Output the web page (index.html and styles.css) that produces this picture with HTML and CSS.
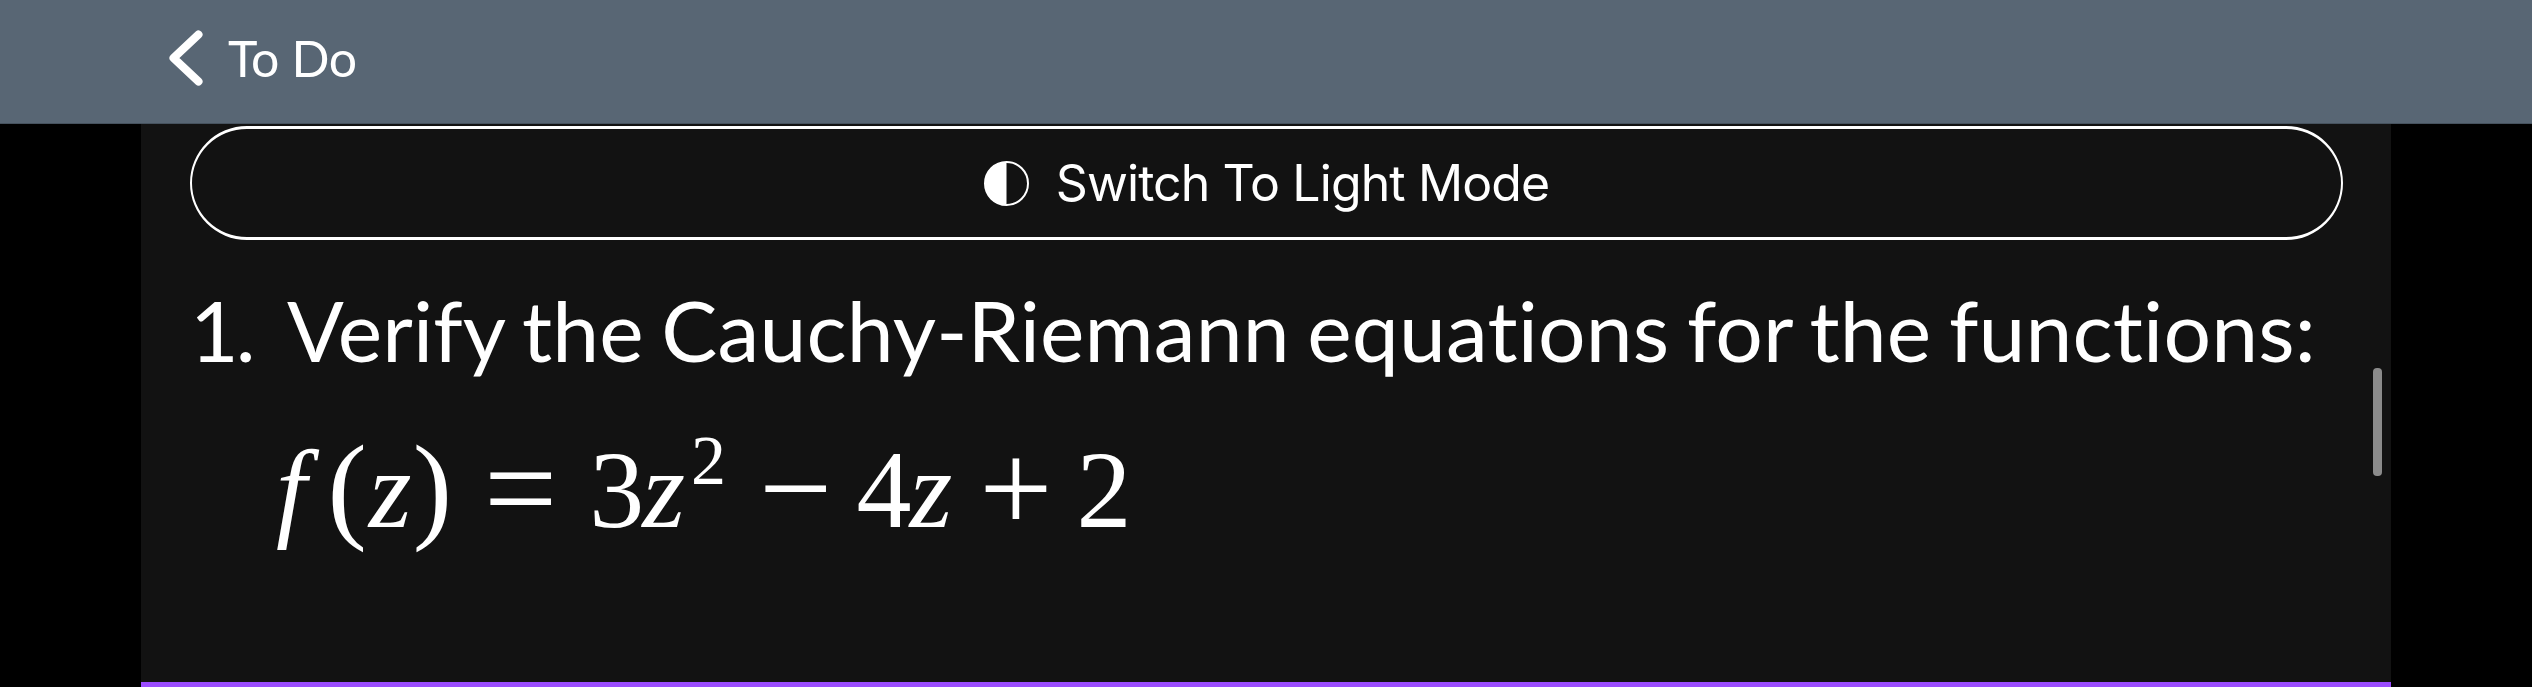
FILE: index.html
```html
<!DOCTYPE html>
<html lang="en">
<head>
<meta charset="utf-8">
<title>To Do</title>
<link rel="stylesheet" href="styles.css">
</head>
<body>
<header class="topbar">
  <svg class="chevron" viewBox="0 0 34 56" width="34" height="56" aria-hidden="true"><path d="M29.5 4.5 L4.5 28 L29.5 51.5" fill="none" stroke="#fff" stroke-width="8" stroke-linecap="round" stroke-linejoin="round"/></svg>
  <span class="back-label">To Do</span>
</header>
<main class="stage">
  <section class="panel">
    <div class="content">
      <button class="mode-btn" type="button">
        <svg class="mode-icon" viewBox="0 0 45 45" width="45" height="45" aria-hidden="true"><circle cx="22.5" cy="22.5" r="21.5" fill="none" stroke="#fff" stroke-width="2"/><path d="M22.5 1 A21.5 21.5 0 0 0 22.5 44 Z" fill="#fff"/></svg>
        <span>Switch To Light Mode</span>
      </button>
      <div class="question">
        <span class="num">1.</span>
        <div class="body">
          <p class="prompt">Verify the Cauchy-Riemann equations for the functions:</p>
          <div class="math"><i class="f">f</i><span class="lp">(</span><i class="z1">z</i><span class="rp">)</span><span class="eq op">=</span><span class="d3">3</span><i class="z2">z</i><sup class="sq">2</sup><span class="mi op">−</span><span class="d4">4</span><i class="z3">z</i><span class="pl op">+</span><span class="d2">2</span></div>
        </div>
      </div>
    </div>
    <div class="scrollthumb"></div>
    <div class="accent"></div>
  </section>
</main>
</body>
</html>
```
FILE: styles.css
```css
* { box-sizing: border-box; }
html, body { margin: 0; height: 100%; }
body {
  width: 2532px;
  height: 687px;
  overflow: hidden;
  background: #000;
  display: flex;
  flex-direction: column;
  color: #fff;
  font-family: "Lato", "Liberation Sans", sans-serif;
  font-variant-ligatures: none;
}
.topbar {
  height: 124px;
  flex: none;
  background: #586674;
  border-bottom: 1px solid #46525e;
  display: flex;
  align-items: center;
  padding: 0 0 7px 169px;
  gap: 25px;
}
.chevron { flex: none; }
.back-label {
  font-size: 50px;
  font-weight: 400;
  line-height: 60px;
  letter-spacing: -0.4px;
}
.stage {
  flex: 1;
  display: flex;
  justify-content: center;
  min-height: 0;
}
.panel {
  width: 2250px;
  background: #121212;
  position: relative;
  display: flex;
  flex-direction: column;
}
.content {
  flex: 1;
  padding: 2px 48px 0 49px;
}
.mode-btn {
  width: 100%;
  height: 114px;
  background: transparent;
  color: #fff;
  border-style: solid;
  border-color: #fff;
  border-width: 3px 2px;
  border-radius: 57px;
  display: flex;
  align-items: center;
  justify-content: center;
  gap: 27px;
  padding: 0;
  font-family: "Inter", "Liberation Sans", sans-serif;
  font-size: 50px;
  font-weight: 400;
  letter-spacing: -0.9px;
}
.mode-icon { flex: none; }
.question {
  display: flex;
  margin-top: 40px;
}
.num {
  width: 97px;
  flex: none;
  font-size: 84px;
  line-height: 100px;
  letter-spacing: -3px;
}
.prompt {
  margin: 0;
  font-size: 84px;
  line-height: 100px;
  letter-spacing: 0.15px;
  word-spacing: -4px;
  white-space: nowrap;
}
.math {
  display: flex;
  align-items: baseline;
  margin: 43px 0 0 -11px;
  font-family: "Liberation Serif", serif;
  font-size: 110px;
  line-height: 120px;
}
.math > * { display: block; flex: none; }
.op { font-size: 130px; line-height: 120px; transform: translateY(5px); }
.lp { margin-left: 21px; font-size: 118px; }
.z1 { margin-left: 2px; }
.rp { margin-left: 1px; font-size: 118px; }
.eq { margin-left: 32px; }
.d3 { margin-left: 32px; }
.z2 { margin-left: -2px; }
.sq { font-size: 70px; line-height: 0; transform: translateY(-43px); margin-left: 6px; }
.mi { margin-left: 33px; }
.d4 { margin-left: 24px; }
.z3 { margin-left: -2px; }
.pl { margin-left: 27px; }
.d2 { margin-left: 24px; }
.scrollthumb {
  position: absolute;
  left: 2232px;
  top: 244px;
  width: 9px;
  height: 108px;
  border-radius: 4px;
  background: #8b8b8b;
}
.accent {
  height: 5px;
  flex: none;
  background: #9b4dff;
}
```
